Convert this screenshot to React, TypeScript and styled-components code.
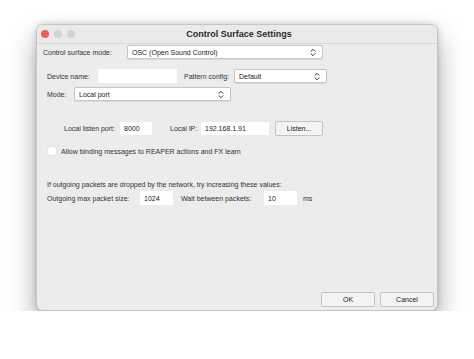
import styled, { createGlobalStyle } from 'styled-components';

const Global = createGlobalStyle`
  html, body { margin: 0; padding: 0; background: #ffffff; }
  body { font-family: "Liberation Sans", Arial, sans-serif; color: #262626; }
`;

const Chevrons = () => (
    <svg width="6" height="9" viewBox="0 0 6 9" fill="none" stroke="#333" strokeWidth="1" strokeLinecap="round" strokeLinejoin="round">
        <path d="M1 3.3 L3 1.3 L5 3.3" />
        <path d="M1 5.7 L3 7.7 L5 5.7" />
    </svg>
);

const App = () => {
    return (
        <>
            <Global />
            <Window>
                <TitleBar>
                    <Lights>
                        <Light color="#ec5f57" />
                        <Light color="#d3d3d3" />
                        <Light color="#d3d3d3" />
                    </Lights>
                    <Title>Control Surface Settings</Title>
                </TitleBar>

                <Row top={1} indent={6}>
                    <Label w={84}>Control surface mode:</Label>
                    <Select w={196}><span>OSC (Open Sound Control)</span><Chevrons /></Select>
                </Row>

                <Row top={10} indent={10}>
                    <Label w={51}>Device name:</Label>
                    <Input w={79} />
                    <Label w={50} gap={7}>Pattern config:</Label>
                    <Select w={93}><span>Default</span><Chevrons /></Select>
                </Row>

                <Row top={4} indent={10}>
                    <Label w={27}>Mode:</Label>
                    <Select w={157}><span>Local port</span><Chevrons /></Select>
                </Row>

                <Row top={20} indent={27} h={15}>
                    <Label w={56}>Local listen port:</Label>
                    <Input w={32} h={13}>8000</Input>
                    <Label w={31} gap={18}>Local IP:</Label>
                    <Input w={68} h={13}>192.168.1.91</Input>
                    <Button w={48} gap={6}>Listen...</Button>
                </Row>

                <Row top={10} indent={11} h={10}>
                    <Check />
                    <Label gap={5}>Allow binding messages to REAPER actions and FX learn</Label>
                </Row>

                <Row top={23} indent={10} h={10}>
                    <Label>If outgoing packets are dropped by the network, try increasing these values:</Label>
                </Row>

                <Row top={2} indent={10}>
                    <Label w={93}>Outgoing max packet size:</Label>
                    <Input w={33}>1024</Input>
                    <Label w={83} gap={8}>Wait between packets:</Label>
                    <Input w={33}>10</Input>
                    <Label gap={6}>ms</Label>
                </Row>

                <Footer>
                    <Button w={54}>OK</Button>
                    <Button w={54} gap={5}>Cancel</Button>
                </Footer>
            </Window>
        </>
    );
};

const Window = styled.div`
  box-sizing: border-box;
  margin: 24px 0 0 36px;
  width: 402px;
  height: 287px;
  display: flex;
  flex-direction: column;
  background: #ececec;
  border: 1px solid #c4c4c4;
  border-radius: 7px;
  box-shadow: 0 14px 28px rgba(0, 0, 0, 0.32), 0 0 6px rgba(0, 0, 0, 0.18);
  overflow: hidden;
`;

const TitleBar = styled.div`
  position: relative;
  height: 18px;
  flex-shrink: 0;
  display: flex;
  align-items: center;
  justify-content: center;
  border-bottom: 1px solid #d8d8d8;
  background: #eaeaea;
`;

const Lights = styled.div`
  position: absolute;
  left: 4px;
  top: 5px;
  display: flex;
  gap: 5px;
`;

const Light = styled.div<{ color: string }>`
  width: 8px;
  height: 8px;
  border-radius: 50%;
  background: ${(p) => p.color};
`;

const Title = styled.div`
  font-size: 9px;
  font-weight: bold;
  color: #2a2a2a;
  margin-left: 4px;
`;

const Row = styled.div<{ top: number; indent: number; h?: number }>`
  display: flex;
  align-items: center;
  margin-top: ${(p) => p.top}px;
  padding-left: ${(p) => p.indent}px;
  height: ${(p) => p.h ?? 14}px;
  flex-shrink: 0;
`;

const Label = styled.span<{ w?: number; gap?: number }>`
  font-size: 7px;
  color: #333333;
  white-space: nowrap;
  ${(p) => (p.w ? `width: ${p.w}px; flex-shrink: 0;` : '')}
  margin-left: ${(p) => p.gap ?? 0}px;
`;

const Select = styled.div<{ w: number }>`
  box-sizing: border-box;
  width: ${(p) => p.w}px;
  height: 14px;
  display: flex;
  align-items: center;
  justify-content: space-between;
  padding: 0 6px 0 4px;
  background: #ffffff;
  border: 1px solid #c6c6c6;
  border-radius: 2px;
  box-shadow: 0 0.5px 1px rgba(0, 0, 0, 0.08);
  font-size: 7px;
  color: #222;
`;

const Input = styled.div<{ w: number; h?: number }>`
  box-sizing: border-box;
  width: ${(p) => p.w}px;
  height: ${(p) => p.h ?? 14}px;
  display: flex;
  align-items: center;
  padding-left: 4px;
  background: #ffffff;
  font-size: 7px;
  color: #222;
`;

const Button = styled.div<{ w: number; gap?: number }>`
  box-sizing: border-box;
  width: ${(p) => p.w}px;
  height: 15px;
  margin-left: ${(p) => p.gap ?? 0}px;
  display: flex;
  align-items: center;
  justify-content: center;
  background: #f3f3f3;
  border: 1px solid #c3c3c3;
  border-radius: 2px;
  font-size: 7px;
  color: #222;
`;

const Check = styled.div`
  width: 8px;
  height: 8px;
  border-radius: 2px;
  background: #ffffff;
  box-shadow: 0 0 0 0.5px #dcdcdc;
`;

const Footer = styled.div`
  margin-top: auto;
  display: flex;
  justify-content: flex-end;
  padding: 0 3px 3px 0;
`;

export default App;
